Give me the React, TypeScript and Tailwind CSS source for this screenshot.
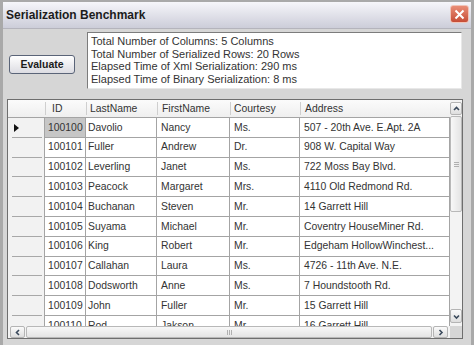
import React from "react";

const rows = [
  ["100100", "Davolio", "Nancy", "Ms.", "507 - 20th Ave. E.Apt. 2A"],
  ["100101", "Fuller", "Andrew", "Dr.", "908 W. Capital Way"],
  ["100102", "Leverling", "Janet", "Ms.", "722 Moss Bay Blvd."],
  ["100103", "Peacock", "Margaret", "Mrs.", "4110 Old Redmond Rd."],
  ["100104", "Buchanan", "Steven", "Mr.", "14 Garrett Hill"],
  ["100105", "Suyama", "Michael", "Mr.", "Coventry HouseMiner Rd."],
  ["100106", "King", "Robert", "Mr.", "Edgeham HollowWinchest..."],
  ["100107", "Callahan", "Laura", "Ms.", "4726 - 11th Ave. N.E."],
  ["100108", "Dodsworth", "Anne", "Ms.", "7 Houndstooth Rd."],
  ["100109", "John", "Fuller", "Mr.", "15 Garrett Hill"],
  ["100110", "Rod", "Jakson", "Mr.", "16 Garrett Hill"],
];

const widths = ["w-[41px]", "w-[71px]", "w-[73px]", "w-[70px]", "w-[150px]"];
const headers = ["ID", "LastName", "FirstName", "Courtesy", "Address"];
const headPad = ["pl-[6px]", "pl-[3px]", "pl-[4px]", "pl-[3px]", "pl-[4px]"];

function Chevron({ dir }: { dir: "up" | "down" | "left" | "right" }) {
  const d =
    dir === "up"
      ? "M2 6 L4.5 3.5 L7 6"
      : dir === "down"
      ? "M2 3.5 L4.5 6 L7 3.5"
      : dir === "left"
      ? "M6 2 L3.5 4.5 L6 7"
      : "M3.5 2 L6 4.5 L3.5 7";
  return (
    <svg width="9" height="9" viewBox="0 0 9 9">
      <path d={d} fill="none" stroke="#3b4a5c" strokeWidth="1.6" />
    </svg>
  );
}

function ScrollBtn({ dir, cls }: { dir: "up" | "down" | "left" | "right"; cls: string }) {
  return (
    <div
      className={`${cls} flex items-center justify-center rounded-[2px] border border-[#b4b4b4] bg-gradient-to-b from-[#fbfbfb] to-[#dedede]`}
    >
      <Chevron dir={dir} />
    </div>
  );
}

export default function App() {
  return (
    <div className="w-[474px] h-[345px] overflow-hidden flex flex-col bg-[#d6d6d6] border-t-2 border-x-[3px] border-[#a9a9a9] font-['Liberation_Sans',Arial,sans-serif] text-[#222]">
      {/* Title bar */}
      <div className="h-[27px] flex items-start bg-gradient-to-b from-[#f6f6fa] to-[#cccdd9] border-b border-[#b4b4bc]">
        <div className="pl-[3px] pt-[6px] text-[12px] font-bold leading-[15px] text-[#1c1c1c]">
          Serialization Benchmark
        </div>
        <div className="ml-auto mr-[2px] mt-[3px] w-[19px] h-[18px] rounded-[3px] border border-[#f0c4b8] bg-gradient-to-b from-[#e98d76] to-[#c64c36] flex items-center justify-center">
          <svg width="11" height="11" viewBox="0 0 11 11">
            <path d="M1.5 1.5 L9.5 9.5 M9.5 1.5 L1.5 9.5" stroke="#ffffff" strokeWidth="2" />
          </svg>
        </div>
      </div>

      {/* Top row */}
      <div className="flex items-start mt-[3px]">
        <button className="ml-[6px] mt-[23px] w-[66px] h-[19px] rounded-[3px] border border-[#5a6478] bg-gradient-to-b from-[#ffffff] to-[#dcdce2] text-[10.5px] font-bold text-[#1c1c1c] leading-none flex items-center justify-center">
          Evaluate
        </button>
        <div className="ml-[12px] w-[375px] h-[57px] bg-white border border-t-[#7c7c7c] border-l-[#7c7c7c] border-r-[#e8e8e8] border-b-[#e8e8e8] pl-[3px] pt-[2px] text-[11px] leading-[12.6px] text-[#333]">
          <div>Total Number of Columns: 5 Columns</div>
          <div>Total Number of Serialized Rows: 20 Rows</div>
          <div>Elapsed Time of Xml Serialization: 290 ms</div>
          <div>Elapsed Time of Binary Serialization: 8 ms</div>
        </div>
      </div>

      {/* Grid */}
      <div className="ml-[4px] mt-[10px] w-[456px] h-[240px] border border-[#6e6e6e] bg-white flex flex-col">
        <div className="flex h-[226px]">
          <div className="w-[442px] h-[226px] overflow-hidden flex flex-col text-[10.4px] text-[#333]">
            {/* Header */}
            <div className="flex h-[18px] shrink-0 bg-gradient-to-b from-[#fbfbfb] to-[#efefef] border-b border-[#a4a4a4]">
              <div className="w-[37px]" />
              {headers.map((h, i) => (
                <div key={h} className={`${widths[i]} flex items-center`}>
                  <span className="w-px h-[13px] bg-[#cfcfcf]" />
                  <span className={`${headPad[i]} whitespace-nowrap`}>{h}</span>
                </div>
              ))}
            </div>
            {/* Rows */}
            {rows.map((r, ri) => (
              <div key={r[0]} className="flex h-[19.8px] shrink-0">
                <div className="w-[37px] relative flex flex-col justify-end bg-[#f2f2f2] border-r border-[#a4a4a4]">
                  {ri === 0 && (
                    <svg
                      className="absolute left-[6px] top-[6px]"
                      width="5"
                      height="8"
                      viewBox="0 0 5 8"
                    >
                      <path d="M0 0 L5 4 L0 8 Z" fill="#111" />
                    </svg>
                  )}
                  <div className="ml-[4px] w-[30px] h-px bg-[#a8a8a8]" />
                </div>
                {r.map((c, ci) => (
                  <div
                    key={ci}
                    className={`${widths[ci]} flex items-center border-r border-b border-[#a4a4a4] whitespace-nowrap overflow-hidden ${
                      ci === 0 ? "pl-[3px]" : ci === 1 ? "pl-[2px]" : "pl-[4px]"
                    } ${ri === 0 && ci === 0 ? "bg-[#c6c6c6]" : ""}`}
                  >
                    {c}
                  </div>
                ))}
              </div>
            ))}
          </div>
          {/* Vertical scrollbar */}
          <div className="w-[12px] h-[226px] bg-[#f3f3f3] flex flex-col pt-[2px] pb-[3px]">
            <ScrollBtn dir="up" cls="w-[12px] h-[13px]" />
            <div className="mt-[1px] w-[12px] h-[96px] rounded-[2px] border border-[#b8b8b8] bg-gradient-to-r from-[#f8f8f8] to-[#e4e4e4] flex flex-col items-center justify-center gap-[1px]">
              <div className="w-[5px] h-px bg-[#b0b0b0]" />
              <div className="w-[5px] h-px bg-[#b0b0b0]" />
              <div className="w-[5px] h-px bg-[#b0b0b0]" />
            </div>
            <div className="flex-1" />
            <ScrollBtn dir="down" cls="w-[12px] h-[14px]" />
          </div>
        </div>
        {/* Horizontal scrollbar */}
        <div className="flex h-[12px] bg-[#f3f3f3]">
          <div className="flex w-[442px] pl-[2px] pr-[2px]">
            <ScrollBtn dir="left" cls="w-[15px] h-[12px]" />
            <div className="mx-[1px] flex-1 h-[12px] rounded-[2px] border border-[#b8b8b8] bg-gradient-to-b from-[#f8f8f8] to-[#e4e4e4] flex items-center justify-center gap-[1px]">
              <div className="w-px h-[5px] bg-[#b0b0b0]" />
              <div className="w-px h-[5px] bg-[#b0b0b0]" />
              <div className="w-px h-[5px] bg-[#b0b0b0]" />
            </div>
            <ScrollBtn dir="right" cls="w-[15px] h-[12px]" />
          </div>
          <div className="w-[12px] bg-[#d6d6d6]" />
        </div>
      </div>
    </div>
  );
}
